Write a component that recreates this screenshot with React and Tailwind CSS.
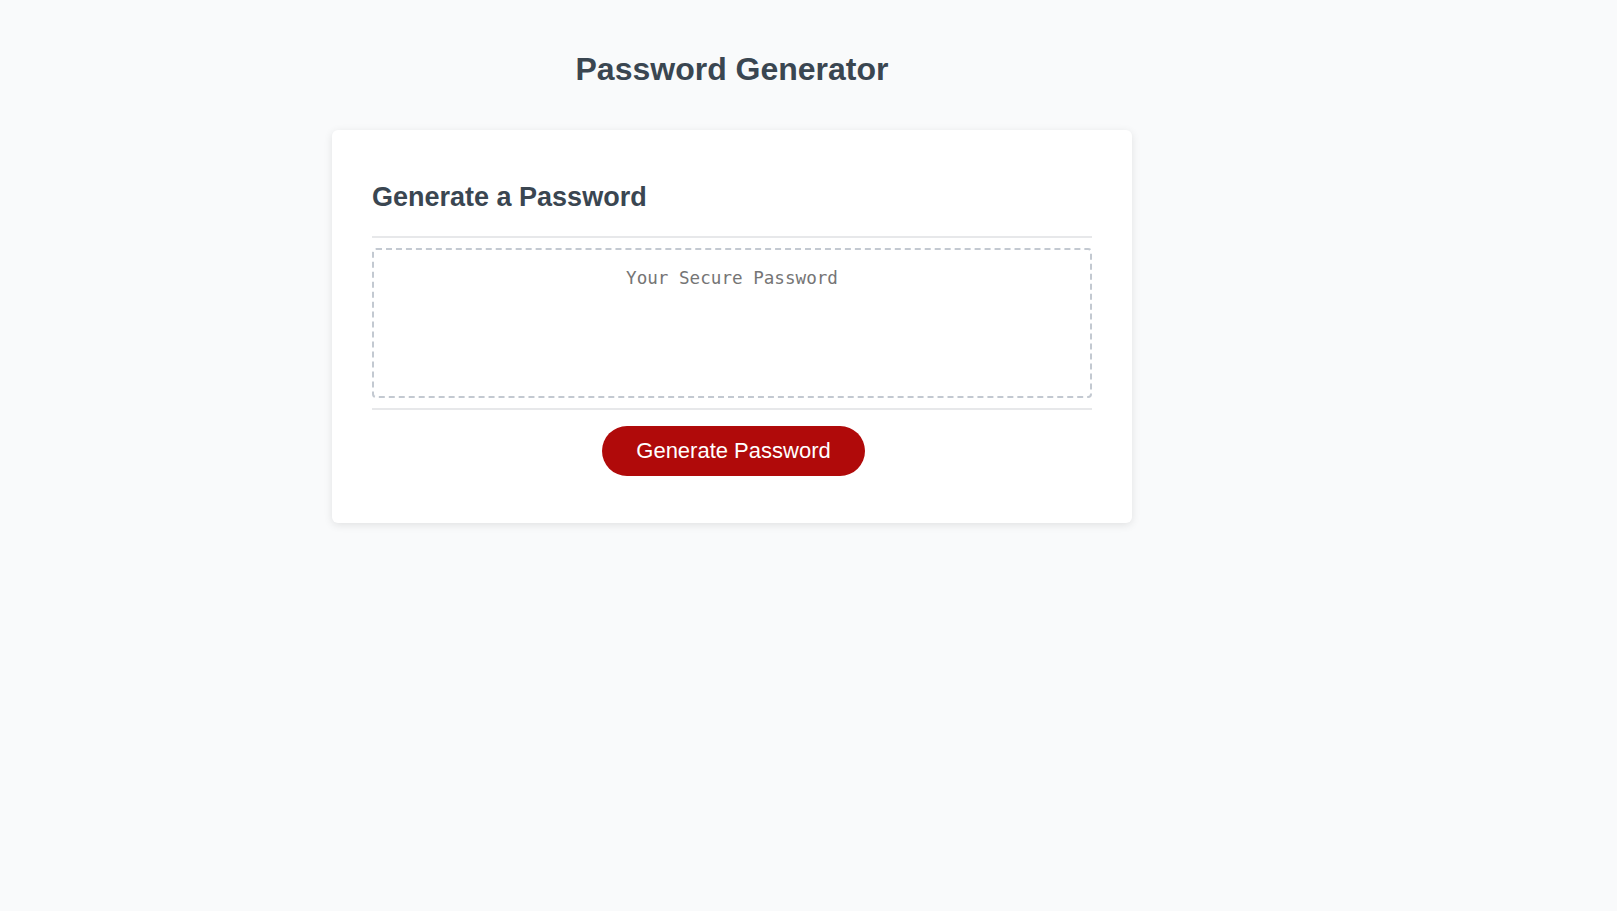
import React from "react";

const App = () => {
  return (
    <div className="min-h-screen bg-[#f9fafb] font-['Liberation_Sans',Arial,sans-serif]">
      <div className="w-[1464px] flex flex-col items-center pt-[51px]">
        <h1 className="text-[32px] font-bold text-[#3a4651] leading-[1.15]">Password Generator</h1>

        <div className="mt-[42px] w-[800px] bg-white rounded-md shadow-[0_2px_8px_rgba(0,0,0,0.1)] px-10 pt-[52px] pb-[47px]">
          <h2 className="text-[27px] font-bold text-[#3a4651] leading-[1.15]">Generate a Password</h2>

          <hr className="mt-[23px] border-0 h-[2px] bg-[#e7e8ea]" />

          <textarea
            readOnly
            placeholder="Your Secure Password"
            className="mt-[10px] block w-full h-[150px] resize-none rounded border-2 border-dashed border-[#c3c9d1] bg-white pt-[15px] px-4 text-center text-[17.6px] font-['DejaVu_Sans_Mono',monospace] text-[#555] placeholder:text-[#757575] outline-none"
          />

          <hr className="mt-[10px] border-0 h-[2px] bg-[#e7e8ea]" />

          <div className="mt-[16px] flex justify-center">
            <button className="ml-[3px] bg-[#b00a0a] text-white text-[22px] leading-[1.15] px-[34px] py-[12.5px] rounded-full">
              Generate Password
            </button>
          </div>
        </div>
      </div>
    </div>
  );
};

export default App;
